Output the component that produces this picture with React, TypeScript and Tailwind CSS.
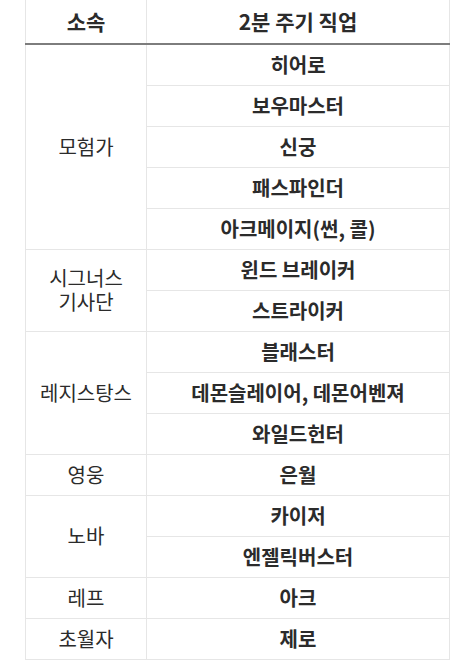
const groups: { name: string[]; jobs: string[] }[] = [
  {
    name: ["모험가"],
    jobs: ["히어로", "보우마스터", "신궁", "패스파인더", "아크메이지(썬, 콜)"],
  },
  { name: ["시그너스", "기사단"], jobs: ["윈드 브레이커", "스트라이커"] },
  {
    name: ["레지스탕스"],
    jobs: ["블래스터", "데몬슬레이어, 데몬어벤져", "와일드헌터"],
  },
  { name: ["영웅"], jobs: ["은월"] },
  { name: ["노바"], jobs: ["카이저", "엔젤릭버스터"] },
  { name: ["레프"], jobs: ["아크"] },
  { name: ["초월자"], jobs: ["제로"] },
];

export default function App() {
  return (
    <div
      className="min-h-[660px] w-[474px] bg-white text-[#2b2b2b]"
      style={{ fontFamily: '"Noto Sans CJK KR", "Noto Sans", sans-serif' }}
    >
      <table className="ml-[25px] w-[425px] table-fixed border-collapse text-[20px]">
        <colgroup>
          <col className="w-[121px]" />
          <col />
        </colgroup>
        <thead>
          <tr>
            <th className="h-[44px] border-x border-b-2 border-x-[#e6e6e6] border-b-[#7d7d7d] text-[21px] font-bold">
              소속
            </th>
            <th className="h-[44px] border-x border-b-2 border-x-[#e6e6e6] border-b-[#7d7d7d] text-[21px] font-bold">
              2분 주기 직업
            </th>
          </tr>
        </thead>
        <tbody>
          {groups.map((g) =>
            g.jobs.map((job, i) => (
              <tr key={job}>
                {i === 0 ? (
                  <td
                    rowSpan={g.jobs.length}
                    className="border border-[#e6e6e6] px-2 text-center leading-[24px]"
                  >
                    {g.name.map((line) => (
                      <div key={line}>{line}</div>
                    ))}
                  </td>
                ) : null}
                <td className="h-[41px] border border-[#e6e6e6] text-center font-bold leading-[24px]">
                  {job}
                </td>
              </tr>
            ))
          )}
        </tbody>
      </table>
    </div>
  );
}
